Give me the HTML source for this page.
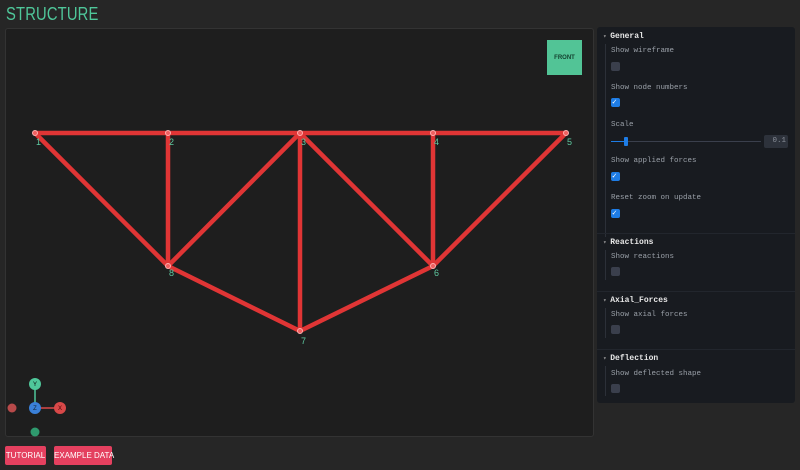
<!DOCTYPE html>
<html><head><style>
body{margin:0;width:800px;height:470px;background:#262626;font-family:"Liberation Sans",sans-serif;position:relative;overflow:hidden}
.t{position:absolute;left:6px;top:4px;color:#4fc79a;font-size:18px;transform:scaleX(0.82);transform-origin:left top;letter-spacing:0.2px}
.vp{position:absolute;left:5px;top:28px;width:587px;height:407px;background:#1e1e1e;border:1px solid #333;border-radius:3px}
.front{position:absolute;left:547px;top:40px;width:35px;height:35px;background:#52c496;color:#14402f;font-size:6px;font-weight:bold;display:flex;align-items:center;justify-content:center}
.btn{position:absolute;top:446px;height:19px;background:#e4405f;color:#fff;font-size:8px;line-height:19px;text-align:center;border-radius:2px;white-space:nowrap}
.pn{position:absolute;left:597px;top:27px;width:198px;height:376px;background:#181b20;border-radius:3px;font-family:"Liberation Mono",monospace;font-size:7.5px;color:#9aa0a8}
.h{position:absolute;left:6px;color:#e8e8e8;font-weight:bold;font-size:8px}
.h:before{content:"▾ ";color:#999;font-size:6px}
.l{position:absolute;left:14px}
.cb{position:absolute;left:14px;width:9px;height:9px;border-radius:2px;background:#3a3f4c}
.cb.on{background:#1e7de6}
.cb.on:after{content:"✓";color:#fff;font-size:8px;position:absolute;left:1px;top:-1px}
.vl{position:absolute;left:8px;width:1px;background:#2c3038}
.sep{position:absolute;left:0;width:198px;height:1px;background:#22262d}
</style></head><body>
<div class="t">STRUCTURE</div>
<div class="vp"></div>
<svg style="position:absolute;left:0;top:0" width="600" height="440">
<g stroke="#e03535" stroke-width="4.5" stroke-linecap="round">
<line x1="35" y1="133" x2="566" y2="133"/>
<line x1="35" y1="133" x2="168" y2="266"/>
<line x1="168" y1="133" x2="168" y2="266"/>
<line x1="168" y1="266" x2="300" y2="133"/>
<line x1="300" y1="133" x2="300" y2="331"/>
<line x1="168" y1="266" x2="300" y2="331"/>
<line x1="300" y1="331" x2="433" y2="266"/>
<line x1="300" y1="133" x2="433" y2="266"/>
<line x1="433" y1="133" x2="433" y2="266"/>
<line x1="433" y1="266" x2="566" y2="133"/>
</g>
<g fill="#f06060" stroke="#ffb0b0" stroke-width="1">
<circle cx="35" cy="133" r="2.5"/><circle cx="168" cy="133" r="2.5"/><circle cx="300" cy="133" r="2.5"/><circle cx="433" cy="133" r="2.5"/><circle cx="566" cy="133" r="2.5"/><circle cx="168" cy="266" r="2.5"/><circle cx="300" cy="331" r="2.5"/><circle cx="433" cy="266" r="2.5"/>
</g>
<g fill="#5ec9a0" font-family="Liberation Sans" font-size="9">
<text x="36" y="145">1</text><text x="169" y="145">2</text><text x="301" y="145">3</text><text x="434" y="145">4</text><text x="567" y="145">5</text><text x="169" y="276">8</text><text x="301" y="344">7</text><text x="434" y="276">6</text>
</g>
<line x1="35" y1="384" x2="35" y2="408" stroke="#4fc79a" stroke-width="1.5"/>
<line x1="35" y1="408" x2="60" y2="408" stroke="#d84848" stroke-width="1.5"/>
<circle cx="12" cy="408" r="4.5" fill="#b84a4a"/>
<circle cx="35" cy="432" r="4.5" fill="#2f9a6e"/>
<circle cx="35" cy="384" r="6" fill="#4fc79a"/>
<circle cx="60" cy="408" r="6" fill="#d84848"/>
<circle cx="35" cy="408" r="6" fill="#3a80d8"/>
<g font-size="6" font-family="Liberation Sans" text-anchor="middle"><text x="35" y="386">Y</text><text x="60" y="410" fill="#400">X</text><text x="35" y="410" fill="#123">Z</text></g>
</svg>
<div class="front">FRONT</div>
<div class="btn" style="left:5px;width:41px">TUTORIAL</div>
<div class="btn" style="left:54px;width:58px">EXAMPLE DATA</div>
<div class="pn">
<div class="h" style="top:5px">General</div>
<div class="vl" style="top:17px;height:193px"></div>
<div class="l" style="top:20px">Show wireframe</div>
<div class="cb" style="top:35px"></div>
<div class="l" style="top:57px">Show node numbers</div>
<div class="cb on" style="top:71px"></div>
<div class="l" style="top:94px">Scale</div>
<div style="position:absolute;left:14px;top:114px;width:150px;height:1px;background:#3a3f4c"></div>
<div style="position:absolute;left:14px;top:114px;width:15px;height:1px;background:#1e7de6"></div>
<div style="position:absolute;left:27px;top:110px;width:4px;height:9px;background:#1e7de6;border-radius:1px"></div>
<div style="position:absolute;left:167px;top:108px;width:24px;height:13px;background:#2d323b;border-radius:2px;color:#8a909a;text-align:right;line-height:13px;padding-right:2px;box-sizing:border-box">0.1</div>
<div class="l" style="top:130px">Show applied forces</div>
<div class="cb on" style="top:145px"></div>
<div class="l" style="top:167px">Reset zoom on update</div>
<div class="cb on" style="top:182px"></div>
<div class="sep" style="top:206px"></div>
<div class="h" style="top:211px">Reactions</div>
<div class="vl" style="top:223px;height:30px"></div>
<div class="l" style="top:226px">Show reactions</div>
<div class="cb" style="top:240px"></div>
<div class="sep" style="top:264px"></div>
<div class="h" style="top:269px">Axial_Forces</div>
<div class="vl" style="top:281px;height:30px"></div>
<div class="l" style="top:284px">Show axial forces</div>
<div class="cb" style="top:298px"></div>
<div class="sep" style="top:322px"></div>
<div class="h" style="top:327px">Deflection</div>
<div class="vl" style="top:339px;height:30px"></div>
<div class="l" style="top:343px">Show deflected shape</div>
<div class="cb" style="top:357px"></div>
</div>
</body></html>
